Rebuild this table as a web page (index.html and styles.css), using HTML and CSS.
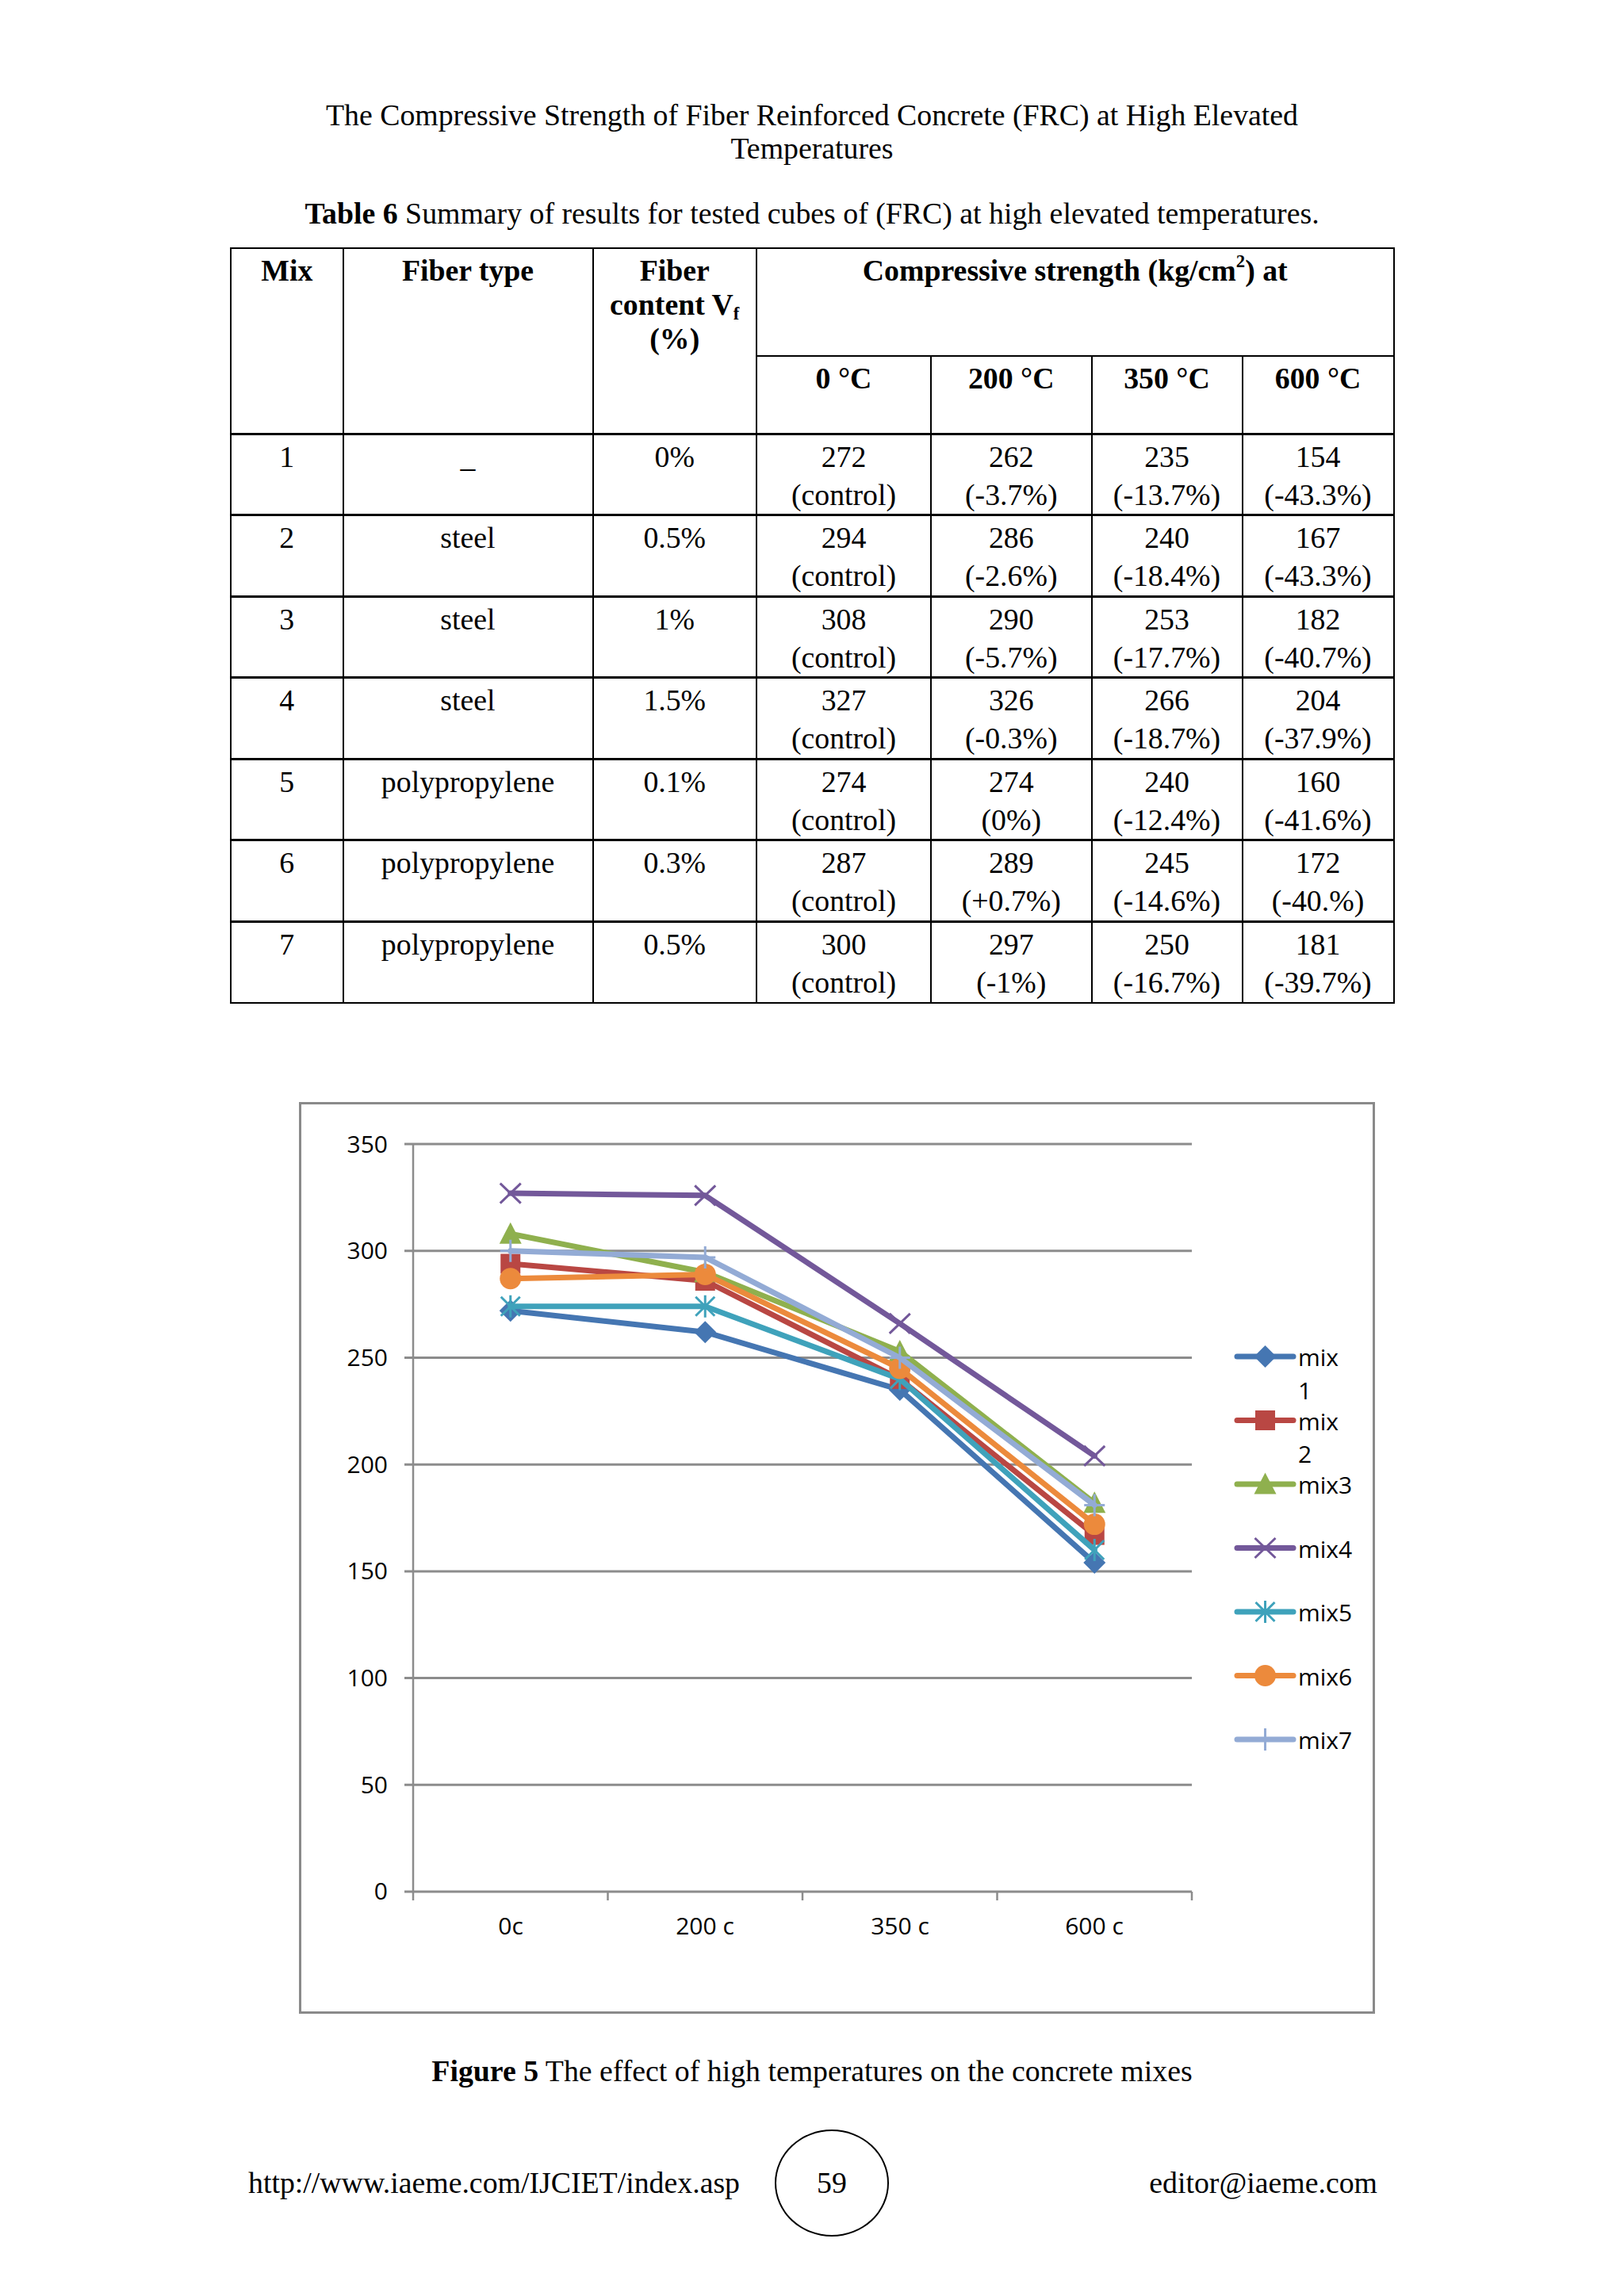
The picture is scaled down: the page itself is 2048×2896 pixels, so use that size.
FILE: index.html
```html
<!DOCTYPE html>
<html lang="en">
<head>
<meta charset="utf-8">
<title>The Compressive Strength of Fiber Reinforced Concrete (FRC) at High Elevated Temperatures</title>
<link rel="stylesheet" href="styles.css">
</head>
<body>
<div class="page">
  <h1 class="running-head">The Compressive Strength of Fiber Reinforced Concrete (FRC) at High Elevated<br>Temperatures</h1>

  <p class="table-caption"><b>Table 6</b> Summary of results for tested cubes of (FRC) at high elevated temperatures.</p>

  <table class="results">
    <colgroup>
      <col class="c-mix"><col class="c-type"><col class="c-content"><col class="c-t0"><col class="c-t1"><col class="c-t2"><col class="c-t3">
    </colgroup>
    <thead>
      <tr class="head-top">
        <th rowspan="2">Mix</th>
        <th rowspan="2">Fiber type</th>
        <th rowspan="2">Fiber<br>content V<sub>f</sub><br>(%)</th>
        <th colspan="4">Compressive strength (kg/cm<sup>2</sup>) at</th>
      </tr>
      <tr class="head-sub">
        <th>0 °C</th><th>200 °C</th><th>350 °C</th><th>600 °C</th>
      </tr>
    </thead>
    <tbody>
      <tr><td>1</td><td>_</td><td>0%</td><td>272<br>(control)</td><td>262<br>(-3.7%)</td><td>235<br>(-13.7%)</td><td>154<br>(-43.3%)</td></tr>
      <tr><td>2</td><td>steel</td><td>0.5%</td><td>294<br>(control)</td><td>286<br>(-2.6%)</td><td>240<br>(-18.4%)</td><td>167<br>(-43.3%)</td></tr>
      <tr><td>3</td><td>steel</td><td>1%</td><td>308<br>(control)</td><td>290<br>(-5.7%)</td><td>253<br>(-17.7%)</td><td>182<br>(-40.7%)</td></tr>
      <tr><td>4</td><td>steel</td><td>1.5%</td><td>327<br>(control)</td><td>326<br>(-0.3%)</td><td>266<br>(-18.7%)</td><td>204<br>(-37.9%)</td></tr>
      <tr><td>5</td><td>polypropylene</td><td>0.1%</td><td>274<br>(control)</td><td>274<br>(0%)</td><td>240<br>(-12.4%)</td><td>160<br>(-41.6%)</td></tr>
      <tr><td>6</td><td>polypropylene</td><td>0.3%</td><td>287<br>(control)</td><td>289<br>(+0.7%)</td><td>245<br>(-14.6%)</td><td>172<br>(-40.%)</td></tr>
      <tr><td>7</td><td>polypropylene</td><td>0.5%</td><td>300<br>(control)</td><td>297<br>(-1%)</td><td>250<br>(-16.7%)</td><td>181<br>(-39.7%)</td></tr>
    </tbody>
  </table>

  <figure class="chart">
    <svg class="chart-svg" width="1351" height="1144" viewBox="3 3 1351 1144" xmlns="http://www.w3.org/2000/svg">
      <defs>
        <path id="mk-diamond" d="M0,-14 L14,0 L0,14 L-14,0 Z"/>
        <rect id="mk-square" x="-12.5" y="-12.5" width="25" height="25"/>
        <path id="mk-triangle" d="M0,-14.5 L14,12.5 L-14,12.5 Z"/>
        <path id="mk-x" class="mk-stroke" d="M-13,-12.5 L13,12.5 M13,-12.5 L-13,12.5"/>
        <path id="mk-star" class="mk-stroke" d="M-12,-12 L12,12 M12,-12 L-12,12 M0,-14 L0,14"/>
        <circle id="mk-circle" r="13.5"/>
        <path id="mk-plus" class="mk-stroke" d="M0,-14 L0,14 M-13,0 L13,0"/>
      </defs>

      <g class="grid">
        <line x1="133" y1="53.1" x2="1126" y2="53.1"/>
        <line x1="133" y1="187.8" x2="1126" y2="187.8"/>
        <line x1="133" y1="322.5" x2="1126" y2="322.5"/>
        <line x1="133" y1="457.2" x2="1126" y2="457.2"/>
        <line x1="133" y1="591.9" x2="1126" y2="591.9"/>
        <line x1="133" y1="726.6" x2="1126" y2="726.6"/>
        <line x1="133" y1="861.3" x2="1126" y2="861.3"/>
        <line x1="133" y1="996" x2="1126" y2="996"/>
      </g>
      <g class="axis">
        <line x1="144" y1="53" x2="144" y2="1007"/>
        <line x1="389.5" y1="996" x2="389.5" y2="1007"/>
        <line x1="635" y1="996" x2="635" y2="1007"/>
        <line x1="880.5" y1="996" x2="880.5" y2="1007"/>
        <line x1="1126" y1="996" x2="1126" y2="1007"/>
      </g>

      <g class="ylab">
        <text x="112" y="63.5">350</text>
        <text x="112" y="198.2">300</text>
        <text x="112" y="332.9">250</text>
        <text x="112" y="467.6">200</text>
        <text x="112" y="602.3">150</text>
        <text x="112" y="737">100</text>
        <text x="112" y="871.7">50</text>
        <text x="112" y="1006.4">0</text>
      </g>
      <g class="xlab">
        <text x="267" y="1050">0c</text>
        <text x="512" y="1050">200 c</text>
        <text x="758" y="1050">350 c</text>
        <text x="1003" y="1050">600 c</text>
      </g>

      <g class="series s1">
        <polyline points="266.75,263.2 512.25,290.2 757.75,362.9 1003.25,581.1"/>
        <use href="#mk-diamond" x="266.75" y="263.2"/><use href="#mk-diamond" x="512.25" y="290.2"/><use href="#mk-diamond" x="757.75" y="362.9"/><use href="#mk-diamond" x="1003.25" y="581.1"/>
      </g>
      <g class="series s2">
        <polyline points="266.75,204 512.25,225.5 757.75,349.4 1003.25,546.1"/>
        <use href="#mk-square" x="266.75" y="204"/><use href="#mk-square" x="512.25" y="225.5"/><use href="#mk-square" x="757.75" y="349.4"/><use href="#mk-square" x="1003.25" y="546.1"/>
      </g>
      <g class="series s3">
        <polyline points="266.75,166.2 512.25,214.7 757.75,314.4 1003.25,505.7"/>
        <use href="#mk-triangle" x="266.75" y="166.2"/><use href="#mk-triangle" x="512.25" y="214.7"/><use href="#mk-triangle" x="757.75" y="314.4"/><use href="#mk-triangle" x="1003.25" y="505.7"/>
      </g>
      <g class="series s4">
        <polyline points="266.75,115.1 512.25,117.8 757.75,279.4 1003.25,446.4"/>
        <use href="#mk-x" x="266.75" y="115.1"/><use href="#mk-x" x="512.25" y="117.8"/><use href="#mk-x" x="757.75" y="279.4"/><use href="#mk-x" x="1003.25" y="446.4"/>
      </g>
      <g class="series s5">
        <polyline points="266.75,257.8 512.25,257.8 757.75,349.4 1003.25,565"/>
        <use href="#mk-star" x="266.75" y="257.8"/><use href="#mk-star" x="512.25" y="257.8"/><use href="#mk-star" x="757.75" y="349.4"/><use href="#mk-star" x="1003.25" y="565"/>
      </g>
      <g class="series s6">
        <polyline points="266.75,222.8 512.25,217.4 757.75,336 1003.25,532.6"/>
        <use href="#mk-circle" x="266.75" y="222.8"/><use href="#mk-circle" x="512.25" y="217.4"/><use href="#mk-circle" x="757.75" y="336"/><use href="#mk-circle" x="1003.25" y="532.6"/>
      </g>
      <g class="series s7">
        <polyline points="266.75,187.8 512.25,195.9 757.75,322.5 1003.25,508.4"/>
        <use href="#mk-plus" x="266.75" y="187.8"/><use href="#mk-plus" x="512.25" y="195.9"/><use href="#mk-plus" x="757.75" y="322.5"/><use href="#mk-plus" x="1003.25" y="508.4"/>
      </g>

      <g class="legend">
        <g class="series s1"><line x1="1183" y1="321" x2="1254" y2="321"/><use href="#mk-diamond" x="1218.5" y="321"/></g>
        <text x="1260" y="333">mix<tspan x="1260" dy="41.8">1</tspan></text>
        <g class="series s2"><line x1="1183" y1="401.5" x2="1254" y2="401.5"/><use href="#mk-square" x="1218.5" y="401.5"/></g>
        <text x="1260" y="413.5">mix<tspan x="1260" dy="41.8">2</tspan></text>
        <g class="series s3"><line x1="1183" y1="482" x2="1254" y2="482"/><use href="#mk-triangle" x="1218.5" y="482"/></g>
        <text x="1260" y="494">mix3</text>
        <g class="series s4"><line x1="1183" y1="562.5" x2="1254" y2="562.5"/><use href="#mk-x" x="1218.5" y="562.5"/></g>
        <text x="1260" y="574.5">mix4</text>
        <g class="series s5"><line x1="1183" y1="643" x2="1254" y2="643"/><use href="#mk-star" x="1218.5" y="643"/></g>
        <text x="1260" y="655">mix5</text>
        <g class="series s6"><line x1="1183" y1="723.5" x2="1254" y2="723.5"/><use href="#mk-circle" x="1218.5" y="723.5"/></g>
        <text x="1260" y="735.5">mix6</text>
        <g class="series s7"><line x1="1183" y1="804" x2="1254" y2="804"/><use href="#mk-plus" x="1218.5" y="804"/></g>
        <text x="1260" y="816">mix7</text>
      </g>
    </svg>
  </figure>

  <p class="figure-caption"><b>Figure 5</b> The effect of high temperatures on the concrete mixes</p>

  <footer class="footer">
    <span class="url">http://www.iaeme.com/IJCIET/index.asp</span>
    <span class="page-no">59</span>
    <span class="email">editor@iaeme.com</span>
  </footer>
</div>
</body>
</html>
```

FILE: styles.css
```css
* { box-sizing: border-box; }

body {
  margin: 0;
  background: #fff;
  color: #000;
  font-family: "Liberation Serif", "Times New Roman", serif;
}

.page {
  width: 2048px;
  min-height: 2896px;
  overflow: hidden;
}

.running-head {
  margin: 0;
  padding-top: 124px;
  text-align: center;
  font-size: 37.8px;
  line-height: 42px;
  font-weight: normal;
}

.table-caption {
  margin: 40px 0 0;
  text-align: center;
  font-size: 37.8px;
  line-height: 42px;
}

/* ---------- results table ---------- */
.results {
  margin: 22px 0 0 290px;
  width: 1468px;
  border-collapse: collapse;
  table-layout: fixed;
  font-size: 37.8px;
}

.c-mix { width: 141.5px; }
.c-type { width: 315px; }
.c-content { width: 206.5px; }
.c-t0 { width: 220px; }
.c-t1 { width: 202.5px; }
.c-t2 { width: 190px; }
.c-t3 { width: 191px; }

.results th,
.results td {
  border: 2px solid #000;
  vertical-align: top;
  text-align: center;
  padding: 0 2px;
}

.results th {
  font-weight: bold;
  line-height: 43px;
  padding-top: 6px;
}

.results td {
  line-height: 48px;
  padding-top: 3px;
}

.results tbody td { border-top-width: 3px; }
.results .head-sub th { border-top-width: 2px; }

.head-top { height: 136px; }
.head-sub { height: 98px; }
.results tbody tr { height: 102.5px; }

.results sup,
.results sub {
  font-size: 0.6em;
  line-height: 0;
}
.results sup { vertical-align: 0.75em; }
.results sub { vertical-align: -0.25em; }

/* ---------- chart ---------- */
.chart {
  margin: 124px 0 0 377px;
  width: 1357px;
  height: 1150px;
  border: 3px solid #8a8a8a;
}

.chart-svg { display: block; }

.grid line {
  stroke: #8c8c8c;
  stroke-width: 3;
}

.axis line {
  stroke: #8c8c8c;
  stroke-width: 2.5;
}

.ylab text,
.xlab text,
.legend text {
  font-family: "Open Sans", "Liberation Sans", sans-serif;
  font-size: 30px;
  fill: #000;
}

.ylab text { text-anchor: end; }
.xlab text { text-anchor: middle; }

.series polyline,
.series line {
  fill: none;
  stroke-width: 7;
  stroke-linejoin: round;
  stroke-linecap: round;
}

.mk-stroke {
  fill: none;
  stroke-width: 3;
}

.s1 { fill: #4576b2; stroke: #4576b2; }
.s2 { fill: #b94743; stroke: #b94743; }
.s3 { fill: #8fb04e; stroke: #8fb04e; }
.s4 { fill: #73589a; stroke: #73589a; }
.s5 { fill: #3fa2bb; stroke: #3fa2bb; }
.s6 { fill: #ec8a3c; stroke: #ec8a3c; }
.s7 { fill: #93abd5; stroke: #93abd5; }

.series use { stroke-width: 0; }
.s4 use, .s5 use, .s7 use { stroke-width: 3; }

/* ---------- caption & footer ---------- */
.figure-caption {
  margin: 51px 0 0;
  text-align: center;
  font-size: 37.8px;
  line-height: 42px;
}

.footer {
  margin-top: 53px;
  width: 1737px;
  height: 135px;
  padding-left: 313px;
  display: flex;
  align-items: center;
  font-size: 37.8px;
  line-height: 42px;
}

.page-no {
  width: 144px;
  height: 135px;
  margin-left: 44px;
  border: 2px solid #000;
  border-radius: 50%;
  display: flex;
  align-items: center;
  justify-content: center;
}

.email { margin-left: auto; }
```
